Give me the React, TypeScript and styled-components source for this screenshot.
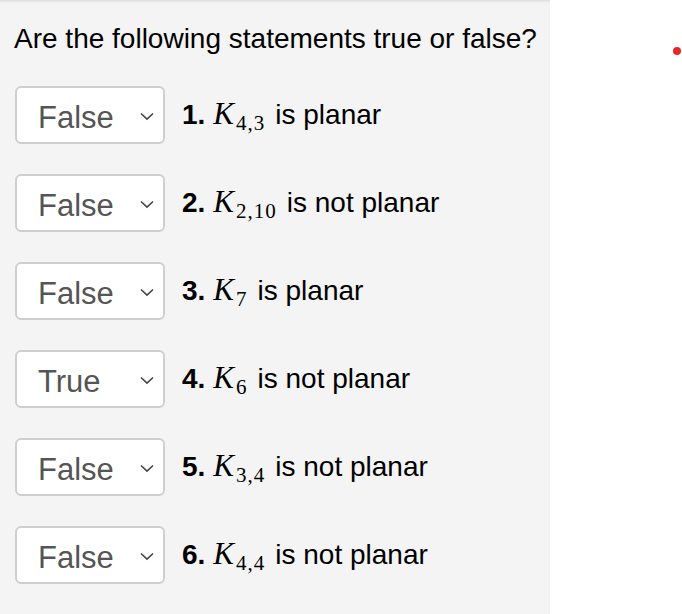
import React, { useState } from 'react'
import styled, { createGlobalStyle } from 'styled-components'

const GlobalStyle = createGlobalStyle`
  html, body {
    margin: 0;
    padding: 0;
    background: #ffffff;
  }
  body {
    font-family: "Liberation Sans", Arial, sans-serif;
  }
`

const Page = styled.div`
  position: relative;
  width: 682px;
  height: 614px;
  overflow: hidden;
`

const Panel = styled.div`
  width: 550px;
  height: 614px;
  box-sizing: border-box;
  background: #f4f4f4;
  box-shadow: inset 0 3px 3px -2px rgba(0, 0, 0, 0.12);
  padding: 20px 0 0 14px;
`

const Heading = styled.p`
  margin: 0 0 28px 0;
  font-size: 28px;
  line-height: 38px;
  color: #000;
`

const List = styled.div`
  display: flex;
  flex-direction: column;
  gap: 30px;
  padding-left: 1px;
`

const Row = styled.div`
  display: flex;
  align-items: center;
  gap: 17px;
  height: 58px;
`

const SelectWrap = styled.div`
  position: relative;
  width: 150px;
  height: 58px;
  flex: none;
`

const Select = styled.select`
  appearance: none;
  -webkit-appearance: none;
  width: 100%;
  height: 100%;
  box-sizing: border-box;
  border: 2px solid #cfcfcf;
  border-radius: 6px;
  background: #ffffff;
  color: #555555;
  font-family: "Liberation Sans", Arial, sans-serif;
  font-size: 31px;
  padding: 4px 0 0 21px;
  outline: none;
`

const Chevron = styled.svg`
  position: absolute;
  right: 11px;
  top: 26px;
  width: 14px;
  height: 9px;
  pointer-events: none;
`

const Label = styled.div`
  font-size: 28px;
  line-height: 40px;
  color: #000;
  white-space: nowrap;
  padding-bottom: 0;
`

const Num = styled.b`
  font-weight: 700;
  margin-right: 8px;
`

const MathK = styled.i`
  font-family: "Liberation Serif", "Times New Roman", serif;
  font-size: 31px;
  font-style: italic;
  margin-right: 2px;
`

const Sub = styled.span`
  font-family: "Liberation Serif", "Times New Roman", serif;
  font-size: 21px;
  letter-spacing: 1px;
  position: relative;
  top: 6px;
  margin-right: 10px;
`

const Dot = styled.span`
  position: absolute;
  left: 673px;
  top: 47px;
  width: 8px;
  height: 8px;
  border-radius: 50%;
  background: #e8262a;
`

const items = [
  { n: 1, sub: '4,3', rest: 'is planar', value: 'False' },
  { n: 2, sub: '2,10', rest: 'is not planar', value: 'False' },
  { n: 3, sub: '7', rest: 'is planar', value: 'False' },
  { n: 4, sub: '6', rest: 'is not planar', value: 'True' },
  { n: 5, sub: '3,4', rest: 'is not planar', value: 'False' },
  { n: 6, sub: '4,4', rest: 'is not planar', value: 'False' },
]

const Statement = ({ n, sub, rest, value }: { n: number; sub: string; rest: string; value: string }) => {
  const [v, setV] = useState(value)
  return (
    <Row>
      <SelectWrap>
        <Select value={v} onChange={(e) => setV(e.target.value)}>
          <option>True</option>
          <option>False</option>
        </Select>
        <Chevron viewBox="0 0 14 9">
          <path d="M1 1.5 L7 7.2 L13 1.5" fill="none" stroke="#444" strokeWidth="1.6" />
        </Chevron>
      </SelectWrap>
      <Label>
        <Num>{n}.</Num>
        <MathK>K</MathK>
        <Sub>{sub}</Sub>
        {rest}
      </Label>
    </Row>
  )
}

export default function App() {
  return (
    <Page>
      <GlobalStyle />
      <Panel>
        <Heading>Are the following statements true or false?</Heading>
        <List>
          {items.map((it) => (
            <Statement key={it.n} {...it} />
          ))}
        </List>
      </Panel>
      <Dot />
    </Page>
  )
}
